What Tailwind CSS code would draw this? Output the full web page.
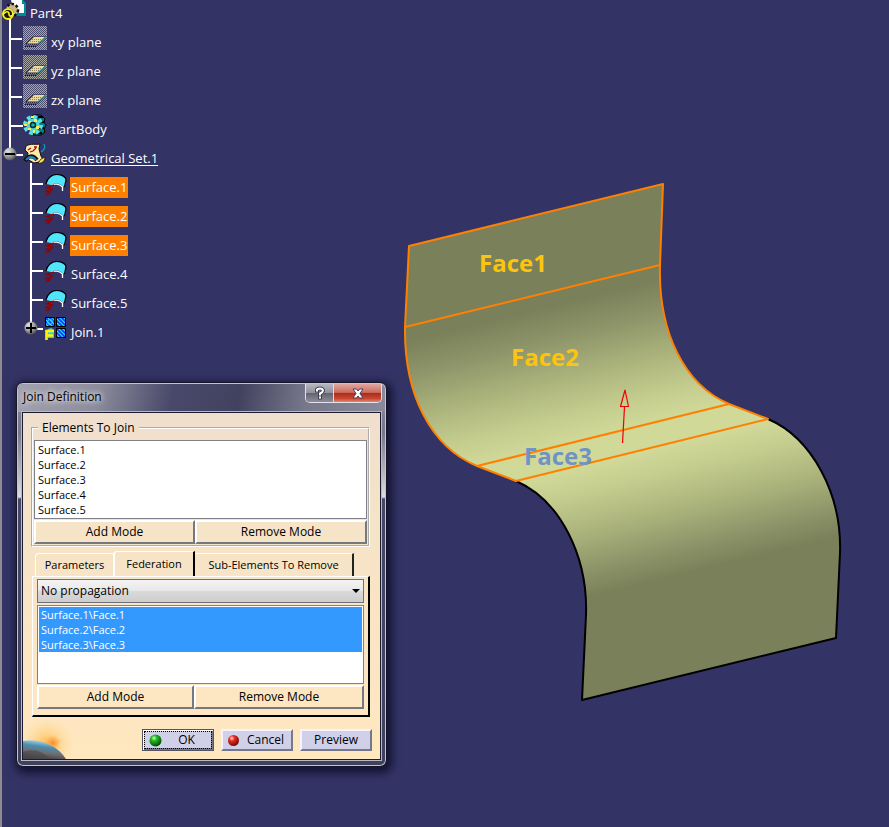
<!DOCTYPE html>
<html lang="en">
<head>
<meta charset="utf-8">
<title>Part4 - Join Definition</title>
<script src="https://cdn.jsdelivr.net/npm/@tailwindcss/browser@4"></script>
</head>
<body class="relative min-h-screen overflow-hidden border-l-2 border-[#8b8b90] bg-[#333366] font-['Open_Sans','Noto_Sans',sans-serif] text-xs text-black">

<!-- Shared symbols -->
<svg class="absolute h-0 w-0" aria-hidden="true">
  <defs>
    <pattern id="mesh" width="2" height="2" patternUnits="userSpaceOnUse">
      <rect width="2" height="2" fill="#4c4c6c"/><path d="M0 0h1v1H0zM1 1h1v1H1z" fill="#a6a6a2"/>
    </pattern>
    <pattern id="weave" width="4" height="4" patternUnits="userSpaceOnUse">
      <rect width="4" height="4" fill="#0a3cff"/><path d="M0 0l4 4M2 -2l4 4M-2 2l4 4" stroke="#38d8ff" stroke-width="1.2"/>
    </pattern>
    <radialGradient id="ball" cx="35%" cy="30%" r="75%">
      <stop offset="0" stop-color="#e4e4e4"/><stop offset=".5" stop-color="#a4a4a4"/><stop offset="1" stop-color="#4c4c4c"/>
    </radialGradient>
    <symbol id="plane" viewBox="0 0 24 24">
      <rect width="24" height="24" fill="url(#mesh)" shape-rendering="crispEdges"/>
      <path d="M2 18L10 10.500H23V12L15 19.500H2Z" fill="#26264c"/>
      <path d="M4 17.500L11 11H22L15 17.500Z" fill="#ecd996"/>
      <path d="M7 15.500H16M9 13.500H18" stroke="#8d8258" stroke-dasharray="1 1"/>
      <path d="M14 18.500L23 11" fill="none" stroke="#2f9aa8" stroke-width="1.200"/>
      <path d="M2 18.500H14" stroke="#2b9aa8" stroke-width="1.400" stroke-dasharray="1 1"/>
      <path d="M2 20.500H14" stroke="#111138" stroke-dasharray="1 1"/>
    </symbol>
    <symbol id="surface" viewBox="0 0 22 22">
      <path d="M1.500 10C2 4 7 0.500 12 0.500C17 0.500 21 3 21 6L20 13L17.500 12C14 8.500 9 8.500 6 11Z" fill="#4fe6fb"/>
      <path d="M1 10C2 4 7 0.500 12 0.500C17 0.500 21 3 21 6L19.500 13" fill="none" stroke="#000" stroke-width="1.200"/>
      <path d="M6 11.500C9 9.500 14 9.500 17.500 13V17" fill="none" stroke="#fff" stroke-width="1.300"/>
      <path d="M9 11L2 13.500L7 15L3.500 20M0.500 17.500L4 17M1 20.500L5 19" fill="none" stroke="#8e0505" stroke-width="1.800"/>
    </symbol>
  </defs>
</svg>

<!-- 3D geometry -->
<svg class="absolute top-0 -left-0.5" width="889" height="827" viewBox="0 0 889 827" role="img" aria-label="Joined surface with Face1, Face2 and Face3">
  <defs>
    <linearGradient id="shade" gradientUnits="userSpaceOnUse" x1="101" y1="415.500" x2="169.800" y2="698.800">
      <stop offset="0" stop-color="#7a8059"/><stop offset=".12" stop-color="#8f966a"/><stop offset=".25" stop-color="#abb37c"/>
      <stop offset=".38" stop-color="#c4cd8e"/><stop offset=".47" stop-color="#d0d998"/><stop offset=".56" stop-color="#d0d998"/>
      <stop offset=".65" stop-color="#c4cd8e"/><stop offset=".78" stop-color="#abb37c"/><stop offset=".9" stop-color="#8f966a"/><stop offset="1" stop-color="#7a8059"/>
    </linearGradient>
  </defs>
  <path fill="url(#shade)" d="M409 246L405 327C404 395 431 447 477 466L516 481C560 500 588 556 586 615L582 700L836 638L840 553C842 494 812 438 768 419L729 404C685 385 658 333 660 265L663 184Z"/>
  <g fill="none" stroke-width="2" stroke-linejoin="round">
    <path stroke="#000" d="M516 481C560 500 588 556 586 615L582 700L836 638L840 553C842 494 812 438 768 419"/>
    <path stroke="#ff8000" d="M516 481L477 466C431 447 404 395 405 327L409 246L663 184L660 265C658 333 685 385 729 404L768 419ZM405 327L660 265M477 466L729 404"/>
    <path stroke="#f00000" stroke-width="1.200" d="M622.500 443L624.500 407M625 390L620.500 406.500H628.500Z"/>
  </g>
  <g class="text-2xl font-bold">
    <text x="479" y="272" fill="#fcc40f">Face1</text>
    <text x="511" y="366" fill="#fcc40f">Face2</text>
    <text x="524" y="465" fill="#6f93c4">Face3</text>
  </g>
</svg>

<!-- Specification tree -->
<ul class="relative -ml-0.5 w-60 text-[13px] text-white">
  <li class="flex h-7 items-center">
    <svg class="h-7 w-[30px] shrink-0 overflow-visible" viewBox="0 0 30 28" aria-hidden="true">
      <path d="M12 0H23L26 3V16H15Z" fill="#008c96"/><path d="M11 0H22V4H24V13H14Z" fill="#fff"/>
      <circle cx="12" cy="10" r="6" fill="#c9b98a" stroke="#111" stroke-width="2.500" stroke-dasharray="2.500 2"/>
      <circle cx="8" cy="14" r="6" fill="#0b1c22"/><circle cx="8" cy="14" r="5" fill="none" stroke="#ffee20" stroke-width="2"/>
      <path d="M4 14C5 11 9 11 9 14S12 17 14 13" fill="none" stroke="#ffee20" stroke-width="1.600"/>
      <path d="M10 19V28" stroke="#fff" stroke-width="2"/>
    </svg>
    <span>Part4</span>
  </li>
  <li class="flex h-[29px] items-center">
    <svg class="h-[29px] w-[51px] shrink-0 overflow-visible" viewBox="0 0 51 29" aria-hidden="true"><path d="M10 0V29M10 11H22" stroke="#fff" stroke-width="2"/><use href="#plane" x="23" y="-2" width="24" height="24"/></svg>
    <span>xy plane</span>
  </li>
  <li class="flex h-[29px] items-center">
    <svg class="h-[29px] w-[51px] shrink-0 overflow-visible" viewBox="0 0 51 29" aria-hidden="true"><path d="M10 0V29M10 11H22" stroke="#fff" stroke-width="2"/><use href="#plane" x="23" y="-2" width="24" height="24"/></svg>
    <span>yz plane</span>
  </li>
  <li class="flex h-[29px] items-center">
    <svg class="h-[29px] w-[51px] shrink-0 overflow-visible" viewBox="0 0 51 29" aria-hidden="true"><path d="M10 0V29M10 11H22" stroke="#fff" stroke-width="2"/><use href="#plane" x="23" y="-2" width="24" height="24"/></svg>
    <span>zx plane</span>
  </li>
  <li class="flex h-[29px] items-center">
    <svg class="h-[29px] w-[51px] shrink-0 overflow-visible" viewBox="0 0 51 29" aria-hidden="true">
      <path d="M10 0V29M10 11H23" stroke="#fff" stroke-width="2"/>
      <path d="M33 0H41L45 4L44 7L46 10L44 14L45 17L41 20H33Z" fill="#007d8c" stroke="#000"/>
      <path d="M38 2H43M39 7H44M39 13H44M38 18H42" stroke="#000" stroke-width="2"/>
      <circle cx="33" cy="10" r="8" fill="none" stroke="#58e4e6" stroke-width="4" stroke-dasharray="3.600 2.683"/>
      <circle cx="33" cy="10" r="6.500" fill="#4fd9dc"/><path d="M28 6h3v3h-3zM34 4h3v3h-3zM28 13h3v2h-3zM36 11h3v3h-3zM24 9h3v2h-3zM33 15h2v3h-2zM31 1h3v2h-3z" fill="#f5ee55"/>
      <circle cx="33" cy="10" r="2.500" fill="#22aab0" stroke="#003038" stroke-width="1.500"/>
    </svg>
    <span>PartBody</span>
  </li>
  <li>
    <div class="flex h-[29px] items-center">
      <svg class="h-[29px] w-[51px] shrink-0 overflow-visible" viewBox="0 0 51 29" aria-hidden="true">
        <path d="M10 0V10M10 11H23M31 19V29" stroke="#fff" stroke-width="2"/>
        <circle cx="10" cy="10" r="6.500" fill="url(#ball)"/><path d="M5 10H15" stroke="#000" stroke-width="2"/>
        <path d="M26 2C31 -1 36 1 40 0L39 5L41 12L44 17L34 19L27 15L28 9L25 6Z" fill="#ffe9a8" stroke="#111"/>
        <path d="M28 6L31 4M30 8L33 7L36 4M34 3L37 3" fill="none" stroke="#a01010" stroke-width="1.300"/>
        <path d="M44 0C46 4 43 7 41 8" fill="none" stroke="#0aa0b8" stroke-width="1.300"/>
        <path d="M25 17C28 11 33 11 37 16" fill="none" stroke="#111" stroke-width="4"/><path d="M26 16C29 12 33 12 36 16" fill="none" stroke="#1c86c0" stroke-width="2"/>
        <path d="M38 19C42 20 45 17 45 13L41 15Z" fill="#ffe14a" stroke="#111" stroke-width=".8"/>
      </svg>
      <span class="underline underline-offset-2">Geometrical Set.1</span>
    </div>
    <ul>
      <li class="flex h-[29px] items-center">
        <svg class="h-[29px] w-[70px] shrink-0" viewBox="0 0 70 29" aria-hidden="true"><path d="M31 0V29M31 11H43" stroke="#fff" stroke-width="2"/><use href="#surface" x="45" y="1" width="22" height="22"/></svg>
        <span class="bg-[#ff8000] px-px leading-[21px]">Surface.1</span>
      </li>
      <li class="flex h-[29px] items-center">
        <svg class="h-[29px] w-[70px] shrink-0" viewBox="0 0 70 29" aria-hidden="true"><path d="M31 0V29M31 11H43" stroke="#fff" stroke-width="2"/><use href="#surface" x="45" y="1" width="22" height="22"/></svg>
        <span class="bg-[#ff8000] px-px leading-[21px]">Surface.2</span>
      </li>
      <li class="flex h-[29px] items-center">
        <svg class="h-[29px] w-[70px] shrink-0" viewBox="0 0 70 29" aria-hidden="true"><path d="M31 0V29M31 11H43" stroke="#fff" stroke-width="2"/><use href="#surface" x="45" y="1" width="22" height="22"/></svg>
        <span class="bg-[#ff8000] px-px leading-[21px]">Surface.3</span>
      </li>
      <li class="flex h-[29px] items-center">
        <svg class="h-[29px] w-[70px] shrink-0" viewBox="0 0 70 29" aria-hidden="true"><path d="M31 0V29M31 11H43" stroke="#fff" stroke-width="2"/><use href="#surface" x="45" y="1" width="22" height="22"/></svg>
        <span class="px-px leading-[21px]">Surface.4</span>
      </li>
      <li class="flex h-[29px] items-center">
        <svg class="h-[29px] w-[70px] shrink-0" viewBox="0 0 70 29" aria-hidden="true"><path d="M31 0V29M31 11H43" stroke="#fff" stroke-width="2"/><use href="#surface" x="45" y="1" width="22" height="22"/></svg>
        <span class="px-px leading-[21px]">Surface.5</span>
      </li>
      <li class="flex h-[29px] items-center">
        <svg class="h-[29px] w-[70px] shrink-0 overflow-visible" viewBox="0 0 70 29" aria-hidden="true">
          <path d="M31 0V10M31 11H43" stroke="#fff" stroke-width="2"/>
          <circle cx="31" cy="10" r="6.500" fill="url(#ball)"/><path d="M26 10H36M31 5V15" stroke="#000" stroke-width="2"/>
          <g fill="url(#weave)" stroke="#000"><path d="M45.500 -.5h9v9h-9zM56.500 -.5h9v9h-9zM56.500 10.500h9v9h-9z"/></g>
          <circle cx="50" cy="4" r="2.500" fill="none" stroke="#38d8ff"/>
          <path d="M46 14C47 10 52 9 54 12V20H48Z" fill="#35d0e8"/>
          <path d="M46.500 22V13H54M46 17.500H53" fill="none" stroke="#fff200" stroke-width="2.600"/>
        </svg>
        <span class="px-px">Join.1</span>
      </li>
    </ul>
  </li>
</ul>

<!-- Join Definition dialog -->
<section role="dialog" aria-labelledby="dlg-title" class="absolute top-[382px] left-[14px] w-[371px] rounded-[7px] border border-[#15152a] bg-[linear-gradient(180deg,#8a8a9c_0,#77778c_50px,#dcdce2_114px,#47476a_116px,#40405f_100%)] px-[5px] pb-[6px] shadow-[2px_3px_9px_3px_rgba(0,0,20,0.65),inset_0_0_0_1px_#c4c4d0]">
  <header class="-mx-1 mt-px flex h-7 items-start justify-between rounded-t-md bg-[linear-gradient(100deg,#a2a2b0_0,#8c8c9c_22%,#48486a_42%,#424260_60%,#77778b_78%,#8a8a9b_100%)]">
    <h1 id="dlg-title" class="flex h-[26px] items-center pl-[5px] [text-shadow:0_0_7px_#fff,0_0_5px_#ddd]">Join Definition</h1>
    <div class="mr-[3px] flex h-[19px] overflow-hidden rounded-b-[5px] border border-t-0 border-[#e2e2ea]">
      <button type="button" aria-label="Help" class="flex w-7 items-center justify-center border-r border-[#dcdce4] bg-[linear-gradient(#b7b7c2_0,#92929f_48%,#62626f_50%,#8d8d9b_100%)]">
        <svg width="12" height="14" viewBox="0 0 12 14" aria-hidden="true"><g fill="none" stroke-linecap="square"><path d="M3 4.500V3.500Q3.500 2.500 6 2.500T9 4.500Q9 6 6 7.500V8.500M6 11.500V11.600" stroke="#454555" stroke-width="4"/><path d="M3 4.500V3.500Q3.500 2.500 6 2.500T9 4.500Q9 6 6 7.500V8.500M6 11.500V11.600" stroke="#fff" stroke-width="2"/></g></svg>
      </button>
      <button type="button" aria-label="Close" class="flex w-[47px] items-center justify-center bg-[linear-gradient(#dfa79f_0,#cb6c5e_47%,#a92c18_50%,#c84531_80%,#de8870_100%)]">
        <svg width="12" height="11" viewBox="0 0 12 11" aria-hidden="true"><path d="M1 1H4.500L6 3L7.500 1H11L8 5.500L11 10H7.500L6 8L4.500 10H1L4 5.500Z" fill="#fff" stroke="#4a4058"/></svg>
      </button>
    </div>
  </header>

  <div class="relative overflow-hidden border border-[#1c1c30] bg-[linear-gradient(#f0dfce_0,#f5e4c9_100px,#fbe5c3_230px,#ffe7bf_100%)] pt-[7px] pr-[10px] pb-2 pl-2 shadow-[0_0_0_1px_#b9b9c6]">
    <fieldset class="border-2 border-white px-px pb-px [border-style:groove]">
      <legend class="ml-1 px-1 leading-4">Elements To Join</legend>
      <select multiple size="5" aria-label="Elements to join" class="mt-1 block h-[79px] w-full appearance-none overflow-hidden border border-[#7f8088] bg-white py-px text-[11px]">
        <option class="h-[15px] min-h-0 px-[3px] py-0 leading-[15px]">Surface.1</option>
        <option class="h-[15px] min-h-0 px-[3px] py-0 leading-[15px]">Surface.2</option>
        <option class="h-[15px] min-h-0 px-[3px] py-0 leading-[15px]">Surface.3</option>
        <option class="h-[15px] min-h-0 px-[3px] py-0 leading-[15px]">Surface.4</option>
        <option class="h-[15px] min-h-0 px-[3px] py-0 leading-[15px]">Surface.5</option>
      </select>
      <div class="mt-px flex">
        <button type="button" class="h-6 w-[161px] border-2 border-t-white border-r-[#77777f] border-b-[#77777f] border-l-white">Add Mode</button>
        <button type="button" class="h-6 flex-1 border-2 border-t-white border-r-[#77777f] border-b-[#77777f] border-l-white">Remove Mode</button>
      </div>
    </fieldset>

    <div class="mt-1 ml-1 flex items-end text-[11px]" role="tablist">
      <button type="button" role="tab" class="h-[23px] w-[78px] rounded-tl border-t border-l border-white">Parameters</button>
      <button type="button" role="tab" aria-selected="true" class="h-[25px] w-[82px] rounded-tl border-t border-r-2 border-l-2 border-t-white border-r-black border-l-white">Federation</button>
      <button type="button" role="tab" class="h-[23px] w-[159px] border-t border-r-2 border-t-white border-r-[#222]">Sub-Elements To Remove</button>
    </div>
    <div role="tabpanel" class="ml-px border-t border-r-2 border-b-2 border-l border-t-white border-r-black border-b-black border-l-white px-1 pt-0.5 pb-1.5">
      <div class="relative">
        <select aria-label="Propagation" class="block h-6 w-full appearance-none border border-[#70707a] bg-[linear-gradient(#f4f4f4_0,#e8e8e8_48%,#d9d9d9_52%,#cdcdcd_100%)] px-[3px]"><option>No propagation</option></select>
        <svg class="pointer-events-none absolute top-2.5 right-1" width="8" height="4" viewBox="0 0 8 4" aria-hidden="true"><path d="M0 0H8L4 4Z"/></svg>
      </div>
      <select multiple size="5" aria-label="Federated faces" class="mt-0.5 block h-[79px] w-full appearance-none overflow-hidden border border-[#7f8088] bg-white p-px text-[11px]">
        <option selected class="h-[15px] min-h-0 px-0.5 py-0 leading-[15px] checked:bg-[linear-gradient(#3399ff,#3399ff)] checked:text-white">Surface.1\Face.1</option>
        <option selected class="h-[15px] min-h-0 px-0.5 py-0 leading-[15px] checked:bg-[linear-gradient(#3399ff,#3399ff)] checked:text-white">Surface.2\Face.2</option>
        <option selected class="h-[15px] min-h-0 px-0.5 py-0 leading-[15px] checked:bg-[linear-gradient(#3399ff,#3399ff)] checked:text-white">Surface.3\Face.3</option>
      </select>
      <div class="mt-px flex">
        <button type="button" class="h-6 w-[157px] border-2 border-t-white border-r-[#77777f] border-b-[#77777f] border-l-white">Add Mode</button>
        <button type="button" class="h-6 flex-1 border-2 border-t-white border-r-[#77777f] border-b-[#77777f] border-l-white">Remove Mode</button>
      </div>
    </div>

    <!-- Planet ornament -->
    <svg class="absolute bottom-0 left-0" width="60" height="40" viewBox="0 0 60 40" aria-hidden="true">
      <defs>
        <radialGradient id="glow" cx="24" cy="26" r="28" gradientUnits="userSpaceOnUse"><stop offset="0" stop-color="#ffb050"/><stop offset=".35" stop-color="#ffc86c" stop-opacity=".7"/><stop offset="1" stop-color="#ffe0a0" stop-opacity="0"/></radialGradient>
        <radialGradient id="flare" cx="30" cy="24" r="8" gradientUnits="userSpaceOnUse"><stop offset="0" stop-color="#ff8a28"/><stop offset="1" stop-color="#ffa040" stop-opacity="0"/></radialGradient>
        <linearGradient id="globe" x1="0.300" y1="1" x2="0.600" y2="0"><stop offset="0" stop-color="#3a3a40"/><stop offset=".35" stop-color="#6f6c6c"/><stop offset=".65" stop-color="#4a8fb2"/><stop offset="1" stop-color="#c4e6f2"/></linearGradient>
      </defs>
      <rect width="60" height="40" fill="url(#glow)"/>
      <rect width="60" height="40" fill="url(#flare)"/>
      <path d="M0 22C16 19 34 26 43 40H0Z" fill="url(#globe)"/>
      <path d="M0 33C10 29 20 32 26 40H0Z" fill="#4b4a4b" opacity=".6"/>
    </svg>

    <div class="relative mt-3 -mr-0.5 flex justify-end gap-[7px]">
      <button type="button" class="h-[22px] w-[72px] border border-[#55555f] bg-[#d0d0e8] p-px shadow-[inset_1px_1px_0_#fff,inset_-2px_-2px_0_#77778a]">
        <span class="flex h-full items-center border border-dotted border-black pl-1">
          <svg width="13" height="13" viewBox="0 0 13 13" aria-hidden="true"><defs><radialGradient id="green" cx="38%" cy="30%" r="70%"><stop offset="0" stop-color="#d8ffd0"/><stop offset=".3" stop-color="#28c028"/><stop offset="1" stop-color="#004c00"/></radialGradient></defs><circle cx="6.500" cy="6.500" r="6" fill="url(#green)"/></svg>
          <span class="flex-1 text-center">OK</span>
        </span>
      </button>
      <button type="button" class="flex h-[22px] w-[72px] items-center border-2 border-t-[#f4f4ff] border-r-[#77778c] border-b-[#77778c] border-l-[#f4f4ff] bg-[#d0d0e8] pl-1">
        <svg width="13" height="13" viewBox="0 0 13 13" aria-hidden="true"><defs><radialGradient id="red" cx="35%" cy="30%" r="70%"><stop offset="0" stop-color="#ffe0d8"/><stop offset=".35" stop-color="#ef2b20"/><stop offset="1" stop-color="#701008"/></radialGradient></defs><circle cx="6.500" cy="6.500" r="5.500" fill="url(#red)"/></svg>
        <span class="flex-1 text-center">Cancel</span>
      </button>
      <button type="button" class="h-[22px] w-[72px] border-2 border-t-[#f4f4ff] border-r-[#77778c] border-b-[#77778c] border-l-[#f4f4ff] bg-[#d0d0e8]">Preview</button>
    </div>
  </div>
</section>
</body>
</html>
